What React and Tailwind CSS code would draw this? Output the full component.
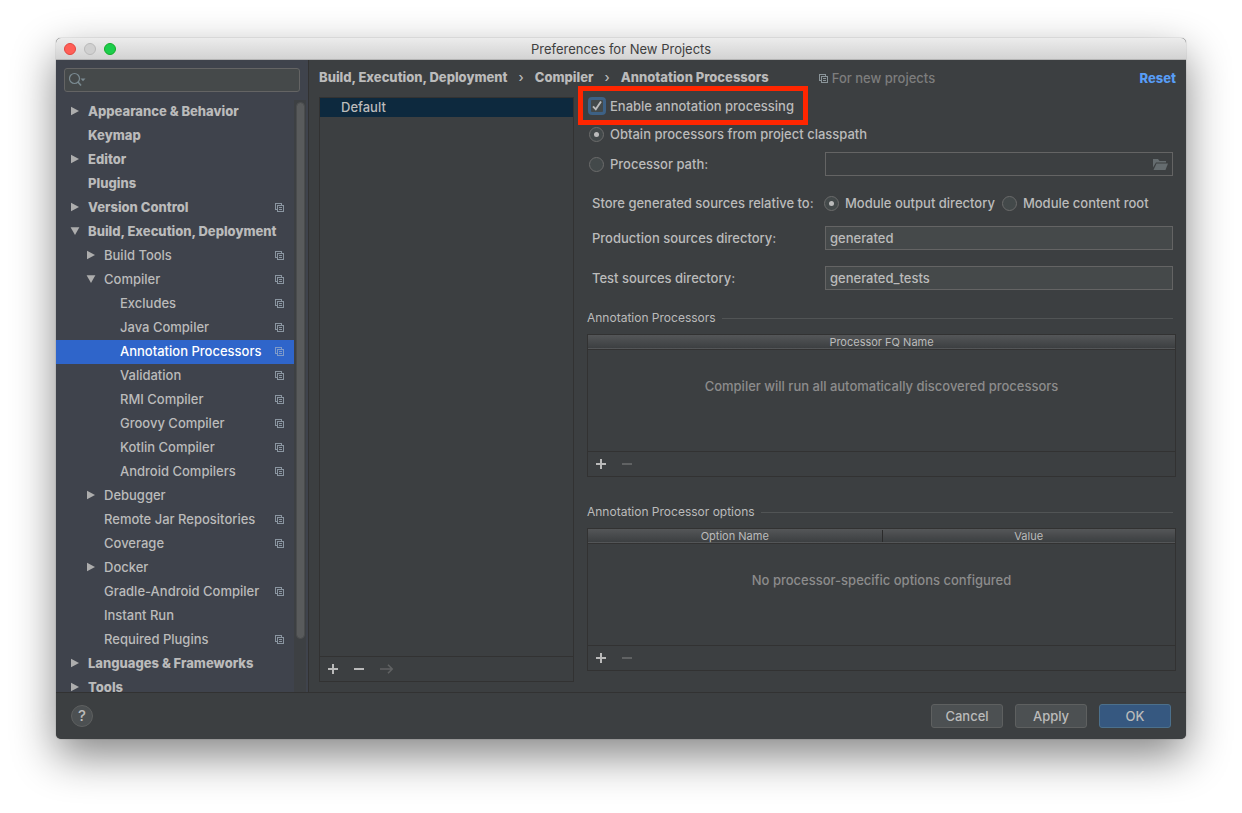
import { useState } from 'react';
import clsx from 'clsx';

const treeItems = [
  { label: 'Appearance & Behavior', level: 0, arrow: 'right' },
  { label: 'Keymap', level: 0 },
  { label: 'Editor', level: 0, arrow: 'right' },
  { label: 'Plugins', level: 0 },
  { label: 'Version Control', level: 0, arrow: 'right', project: true },
  { label: 'Build, Execution, Deployment', level: 0, arrow: 'down' },
  { label: 'Build Tools', level: 1, arrow: 'right', project: true },
  { label: 'Compiler', level: 1, arrow: 'down', project: true },
  { label: 'Excludes', level: 2, project: true },
  { label: 'Java Compiler', level: 2, project: true },
  { label: 'Annotation Processors', level: 2, project: true },
  { label: 'Validation', level: 2, project: true },
  { label: 'RMI Compiler', level: 2, project: true },
  { label: 'Groovy Compiler', level: 2, project: true },
  { label: 'Kotlin Compiler', level: 2, project: true },
  { label: 'Android Compilers', level: 2, project: true },
  { label: 'Debugger', level: 1, arrow: 'right' },
  { label: 'Remote Jar Repositories', level: 1, project: true },
  { label: 'Coverage', level: 1, project: true },
  { label: 'Docker', level: 1, arrow: 'right' },
  { label: 'Gradle-Android Compiler', level: 1, project: true },
  { label: 'Instant Run', level: 1 },
  { label: 'Required Plugins', level: 1, project: true },
  { label: 'Languages & Frameworks', level: 0, arrow: 'right' },
  { label: 'Tools', level: 0, arrow: 'right' },
];

const indents = ['pl-[14px]', 'pl-[30px]', 'pl-[46px]'];

function ProjectIcon({ className }) {
  return (
    <svg className={clsx('h-[9px] w-[9px] shrink-0', className)} viewBox="0 0 9 9" fill="none" stroke="currentColor" shapeRendering="crispEdges">
      <path d="M2 6.5H.5v-6h6V2" />
      <path d="M2.5 2.5h6v6h-6z" />
      <path d="M4 4.5h3M4 6.5h3" />
    </svg>
  );
}

function TreeArrow({ direction }) {
  return (
    <svg className="h-[10px] w-[10px]" viewBox="0 0 10 10" fill="#adadad">
      {direction === 'right' && <path d="M1 .8 9 5 1 9.2z" />}
      {direction === 'down' && <path d="M.6 1.2h8.8L5 9z" />}
    </svg>
  );
}

function PlusIcon() {
  return (
    <svg className="h-[10px] w-[10px]" viewBox="0 0 10 10" fill="currentColor">
      <path d="M4 0h2v4h4v2H6v4H4V6H0V4h4z" />
    </svg>
  );
}

function MinusIcon() {
  return (
    <svg className="h-[10px] w-[10px]" viewBox="0 0 10 10" fill="currentColor">
      <path d="M0 4h10v2H0z" />
    </svg>
  );
}

function Toolbar({ canRemove, children }) {
  return (
    <div className="flex h-[25px] shrink-0 items-center gap-4 border-t border-[#323232] px-2">
      <button aria-label="Add" className="text-[#bababa]">
        <PlusIcon />
      </button>
      <button aria-label="Remove" disabled={!canRemove} className="text-[#bababa] disabled:text-[#606263]">
        <MinusIcon />
      </button>
      {children}
    </div>
  );
}

function Radio({ label, ...props }) {
  return (
    <label className="flex items-center gap-[6px] whitespace-nowrap">
      <input
        type="radio"
        className="grid h-[15px] w-[15px] appearance-none place-items-center rounded-full border border-[#6b6b6b] bg-[#43494a] before:h-[5px] before:w-[5px] before:rounded-full checked:before:bg-[#bbbbbb]"
        {...props}
      />
      {label}
    </label>
  );
}

function SectionTitle({ children }) {
  return (
    <div className="mr-[3px] flex h-6 items-center gap-[6px] text-xs">
      <h2 className="font-normal">{children}</h2>
      <span className="h-px flex-1 bg-[#515455]" />
    </div>
  );
}

function OptionsTable({ columns, emptyText }) {
  return (
    <div className="mt-1 flex h-[143px] flex-col border border-[#323232]">
      <table className="w-full table-fixed border-collapse">
        <thead>
          <tr className="h-[14px] border-b border-[#323232] bg-linear-to-b from-[#545658] to-[#3c3f41]">
            {columns.map((column, i) => (
              <th key={column} className="p-0 text-[11px] leading-3 font-normal">
                <div className={clsx(i > 0 && 'border-l border-[#2b2b2b]')}>{column}</div>
              </th>
            ))}
          </tr>
        </thead>
      </table>
      <p className="flex-1 pt-[26px] text-center leading-5 text-[#8c8c8c]">{emptyText}</p>
      <Toolbar />
    </div>
  );
}

function Sidebar({ selected, onSelect }) {
  return (
    <aside className="flex w-[253px] shrink-0 flex-col border-r border-[#323232] bg-[#3f434c]">
      <div className="p-2">
        <div className="flex h-6 items-center rounded-[3px] border border-[#646464] bg-[#45494a] px-1">
          <svg className="h-4 w-5 shrink-0" viewBox="0 0 20 16" fill="none" stroke="#7a8a91">
            <circle cx="5.5" cy="6.5" r="5" strokeWidth="1.2" />
            <path d="m9 10 3 3.5" strokeWidth="1.6" />
            <path d="M11.5 6.5h5L14 9.300z" fill="#7a8a91" stroke="none" />
          </svg>
          <input aria-label="Search settings" className="min-w-0 flex-1 bg-transparent outline-none" />
        </div>
      </div>
      <div className="flex min-h-0 flex-1">
        <ul role="tree" className="min-w-0 flex-1 overflow-hidden">
          {treeItems.map((item) => (
            <li
              key={item.label}
              role="treeitem"
              aria-selected={item.label === selected}
              onClick={() => onSelect(item.label)}
              className={clsx(
                'flex h-6 items-center pr-[10px] pb-[2px] whitespace-nowrap',
                indents[item.level],
                item.level === 0 && 'font-extrabold',
                item.label === selected && 'bg-[#2f65ca] text-white'
              )}
            >
              <span className="w-[18px] shrink-0">
                <TreeArrow direction={item.arrow} />
              </span>
              <span className="flex-1">{item.label}</span>
              {item.project && (
                <ProjectIcon className={item.label === selected ? 'text-[#7f9bc9]' : 'text-[#8a95a0]'} />
              )}
            </li>
          ))}
        </ul>
        <div className="mr-[2px] w-3 bg-[#3d4043] pt-[2px] pr-px pl-[2px]">
          <div className="h-[91%] rounded-full border border-[#4a4c4d] bg-[#595b5c]" />
        </div>
      </div>
    </aside>
  );
}

function ProcessorForm() {
  const [enabled, setEnabled] = useState(true);
  const [source, setSource] = useState('classpath');
  const [relativeTo, setRelativeTo] = useState('output');

  const fieldClass = 'h-6 min-w-0 flex-1 border border-[#646464] bg-[#45494a] px-1 outline-none';
  const labelClass = 'w-[233px] shrink-0';

  return (
    <form className="min-w-0 flex-1" onSubmit={(e) => e.preventDefault()}>
      <div className="flex h-5 items-center pl-px">
        <label className="relative flex items-center gap-1">
          <span className="grid h-[18px] w-[18px] place-items-center">
            <input
              type="checkbox"
              checked={enabled}
              onChange={(e) => setEnabled(e.target.checked)}
              className="peer col-start-1 row-start-1 h-[18px] w-[18px] appearance-none rounded-[4px] border-3 border-[#3d6185] bg-[#43494a]"
            />
            <svg className="pointer-events-none invisible col-start-1 row-start-1 h-3 w-3 peer-checked:visible" viewBox="0 0 12 12" fill="none" stroke="#bbbbbb" strokeWidth="1.9">
              <path d="m2 6.300 2.800 3L10 1.500" />
            </svg>
          </span>
          Enable annotation processing
          <span className="pointer-events-none absolute -inset-x-[10px] -top-[10px] h-[39px] w-[230px] border-[5px] border-[#ff2600]" />
        </label>
      </div>
      <div className="mt-2 flex h-5 items-center pl-[2px]">
        <Radio name="source" label="Obtain processors from project classpath" checked={source === 'classpath'} onChange={() => setSource('classpath')} />
      </div>
      <div className="mt-2 flex items-center pr-[3px] pl-[2px]">
        <div className="w-[236px] shrink-0">
          <Radio name="source" label="Processor path:" checked={source === 'path'} onChange={() => setSource('path')} />
        </div>
        <div className="flex h-6 min-w-0 flex-1 items-center border border-[#646464] pr-1">
          <input aria-label="Processor path" disabled className="min-w-0 flex-1 px-1" />
          <button aria-label="Browse">
            <svg className="h-[11px] w-[15px]" viewBox="0 0 15 11" fill="#656c6f">
              <path d="M0 0h5l1.500 2H13v1.500H3L0 8.500z" />
              <path d="M3.500 4.500H15L12.500 11H.500z" />
            </svg>
          </button>
        </div>
      </div>
      <div className="mt-[15px] mb-[11px] flex h-6 items-center pl-[5px]">
        <span className="w-[232px] shrink-0">Store generated sources relative to:</span>
        <div className="flex gap-[7px]">
          <Radio name="relative" label="Module output directory" checked={relativeTo === 'output'} onChange={() => setRelativeTo('output')} />
          <Radio name="relative" label="Module content root" checked={relativeTo === 'content'} onChange={() => setRelativeTo('content')} />
        </div>
      </div>
      <div className="flex items-center pr-[3px] pl-[5px]">
        <label htmlFor="production" className={labelClass}>Production sources directory:</label>
        <input id="production" defaultValue="generated" className={fieldClass} />
      </div>
      <div className="mt-4 mb-4 flex items-center pr-[3px] pl-[5px]">
        <label htmlFor="test" className={labelClass}>Test sources directory:</label>
        <input id="test" defaultValue="generated_tests" className={fieldClass} />
      </div>
      <SectionTitle>Annotation Processors</SectionTitle>
      <OptionsTable columns={['Processor FQ Name']} emptyText="Compiler will run all automatically discovered processors" />
      <div className="h-[23px]" />
      <SectionTitle>Annotation Processor options</SectionTitle>
      <OptionsTable columns={['Option Name', 'Value']} emptyText="No processor-specific options configured" />
    </form>
  );
}

export default function App() {
  const [selected, setSelected] = useState('Annotation Processors');

  const buttonClass = 'h-6 w-[72px] rounded-[3px] border';

  return (
    <div className="flex h-screen bg-white px-14 pt-[38px] pb-[74px] font-['Inter',sans-serif] text-[13px] leading-5 font-medium text-[#bbbbbb]">
      <div className="flex min-w-0 flex-1 flex-col overflow-hidden rounded-[5px] bg-[#3c3f41] shadow-[0_0_1px_rgba(0,0,0,0.6),0_17px_44px_rgba(0,0,0,0.48)]">
        <header className="relative flex h-[22px] shrink-0 items-center justify-center border-b border-[#b4b4b4] bg-linear-to-b from-[#ececec] to-[#d3d3d3]">
          <div className="absolute left-2 flex gap-2">
            <button aria-label="Close" className="h-3 w-3 rounded-full border border-[#e2463f] bg-[#ff5f57]" />
            <button aria-label="Minimize" className="h-3 w-3 rounded-full border border-[#b9b9b9] bg-[#d0d0d0]" />
            <button aria-label="Zoom" className="h-3 w-3 rounded-full border border-[#12ac28] bg-[#1ccd4c]" />
          </div>
          <h1 className="font-normal text-[#404040]">Preferences for New Projects</h1>
        </header>

        <div className="flex min-h-0 flex-1">
          <Sidebar selected={selected} onSelect={setSelected} />
          <main className="flex min-w-0 flex-1 flex-col pr-[10px] pb-[10px] pl-[10px]">
            <div className="flex h-9 shrink-0 items-center whitespace-nowrap">
              <nav className="flex gap-[11px] pb-[2px] font-extrabold">
                <span>Build, Execution, Deployment</span>
                <span className="font-medium">›</span>
                <span>Compiler</span>
                <span className="font-medium">›</span>
                <span>Annotation Processors</span>
              </nav>
              <span className="ml-[50px] flex items-center gap-1 text-[#7d7d7d]">
                <ProjectIcon className="text-[#8a9499]" />
                For new projects
              </span>
              <a href="#reset" className="ml-auto font-extrabold text-[#589df6]">Reset</a>
            </div>
            <div className="flex min-h-0 flex-1">
              <section className="mt-px mr-[13px] flex w-[255px] shrink-0 flex-col border border-[#323232]">
                <div className="h-[19px] bg-[#0d293e] pl-[21px] leading-[19px]">Default</div>
                <div className="flex-1" />
                <Toolbar canRemove>
                  <button aria-label="Move to" disabled className="text-[#606263]">
                    <svg className="h-[10px] w-[14px]" viewBox="0 0 14 10" fill="none" stroke="currentColor" strokeWidth="1.6">
                      <path d="M0 5h12M8 .8 12.200 5 8 9.200" />
                    </svg>
                  </button>
                </Toolbar>
              </section>
              <ProcessorForm />
            </div>
          </main>
        </div>

        <footer className="flex h-[47px] shrink-0 items-center border-t border-[#323232] px-[15px]">
          <button aria-label="Help" className="h-[22px] w-[22px] rounded-full border border-[#5e6060] bg-[#4c5052] text-[15px] leading-5">?</button>
          <div className="ml-auto flex gap-3">
            <button className={clsx(buttonClass, 'border-[#5e6060] bg-[#4c5052]')}>Cancel</button>
            <button className={clsx(buttonClass, 'border-[#5e6060] bg-[#4c5052]')}>Apply</button>
            <button className={clsx(buttonClass, 'border-[#4c708c] bg-[#365880]')}>OK</button>
          </div>
        </footer>
      </div>
    </div>
  );
}
